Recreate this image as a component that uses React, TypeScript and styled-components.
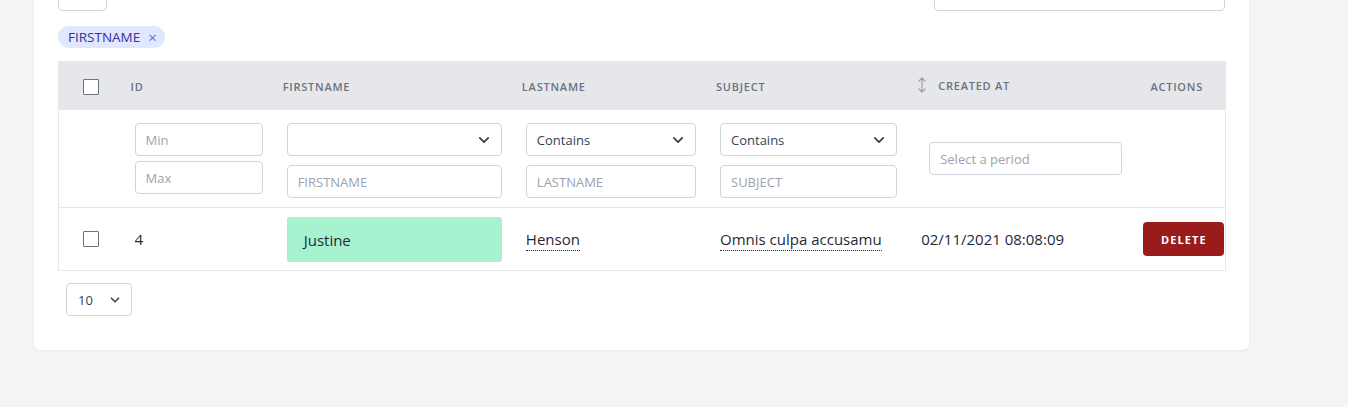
import styled, { createGlobalStyle } from 'styled-components';

const GlobalStyle = createGlobalStyle`
  html, body {
    margin: 0;
    padding: 0;
    background: #f3f4f6;
    font-family: 'Open Sans', 'Noto Sans', sans-serif;
    color: #111827;
    overflow: hidden;
  }
  * { box-sizing: border-box; }
`;

// --- Layout ---

const Page = styled.div`
  padding: 0 99px 0 34px;
  height: 407px;
`;

const Card = styled.div`
  margin-top: -51px;
  background: #ffffff;
  border-radius: 6px;
  box-shadow: 0 1px 2px rgba(0, 0, 0, 0.06);
  padding: 24px 24px 34px 24px;
`;

const Toolbar = styled.div`
  display: flex;
  justify-content: space-between;
  align-items: flex-end;
  height: 38px;
`;

const IconButton = styled.button`
  width: 49px;
  height: 38px;
  border: 1px solid #d1d5db;
  border-radius: 4px;
  background: #fff;
  display: flex;
  align-items: center;
  justify-content: center;
  padding: 0;
  color: #4b5563;
`;

const Search = styled.div`
  width: 291px;
  height: 38px;
  border: 1px solid #d1d5db;
  border-radius: 4px;
  display: flex;
  align-items: center;
  padding-left: 14px;
  color: #9ca3af;
`;

const ChipRow = styled.div`
  display: flex;
  margin: 15px 0 13px;
`;

const Chip = styled.span`
  display: inline-flex;
  align-items: center;
  gap: 8px;
  height: 22px;
  padding: 0 8px 0 10px;
  border-radius: 11px;
  background: #e0e7ff;
  color: #3730a3;
  font-size: 13.5px;
  font-weight: 500;
`;

const ChipClose = styled.span`
  color: #6366f1;
  font-size: 15px;
  line-height: 1;
`;

// --- Table ---

const Table = styled.table`
  width: 1168px;
  border-collapse: collapse;
  table-layout: fixed;
  border-left: 1px solid #e5e7eb;
  border-right: 1px solid #e5e7eb;
`;

const HeadRow = styled.tr`
  background: #e5e7eb;
  height: 49px;
`;

const Th = styled.th<{ align?: 'left' | 'right' }>`
  text-align: ${({ align }) => align ?? 'left'};
  padding: 2px ${({ align }) => (align === 'right' ? '22px' : '0')} 0 20px;
  font-size: 11px;
  font-weight: 600;
  letter-spacing: 0.07em;
  color: #6b7280;
  text-transform: uppercase;
  vertical-align: middle;
`;

const HeadInner = styled.span`
  display: inline-flex;
  align-items: center;
  gap: 11px;
`;

const FilterRow = styled.tr`
  border-bottom: 1px solid #e5e7eb;
`;

const FilterTd = styled.td<{ offset?: number }>`
  padding: 13px 0 9px ${({ offset }) => offset ?? 24}px;
  vertical-align: top;
`;

const FilterCenterTd = styled.td<{ offset?: number }>`
  padding: 0 0 0 ${({ offset }) => offset ?? 24}px;
  vertical-align: middle;
`;

const Stack = styled.div<{ gap: number }>`
  display: flex;
  flex-direction: column;
  gap: ${({ gap }) => gap}px;
`;

const Field = styled.div<{ placeholder?: boolean; width?: number }>`
  height: 33px;
  width: ${({ width }) => (width ? `${width}px` : 'auto')};
  border: 1px solid #d1d5db;
  border-radius: 4px;
  background: #fff;
  display: flex;
  align-items: center;
  justify-content: space-between;
  padding: 0 10px 0 10px;
  font-size: 13px;
  color: ${({ placeholder }) => (placeholder ? '#9ca3af' : '#374151')};
`;

const DataRow = styled.tr`
  height: 62px;
  border-bottom: 1px solid #e5e7eb;
`;

const Td = styled.td<{ offset?: number }>`
  padding: 0 0 0 ${({ offset }) => offset ?? 24}px;
  font-size: 15px;
  color: #1f2937;
  vertical-align: middle;
  white-space: nowrap;
`;

const Highlight = styled.div`
  height: 45px;
  margin: 9px 0 8px;
  background: #a7f3d0;
  border-radius: 2px;
  display: flex;
  align-items: center;
  padding-left: 17px;
  font-size: 15px;
  color: #1f2937;
`;

const Dotted = styled.span`
  border-bottom: 1px dotted #1f2937;
  padding-bottom: 1px;
`;

const Checkbox = styled.span`
  display: block;
  width: 16px;
  height: 16px;
  border: 1.5px solid #6b7280;
  border-radius: 1px;
  background: #fff;
`;

const DeleteButton = styled.button`
  height: 34px;
  width: 81px;
  border: none;
  border-radius: 4px;
  background: #991b1b;
  color: #fff;
  font-family: 'Open Sans', 'Noto Sans', sans-serif;
  font-size: 11px;
  font-weight: 700;
  letter-spacing: 0.1em;
  text-transform: uppercase;
`;

const Pager = styled.div`
  margin: 12px 0 0 8px;
  width: 66px;
  height: 33px;
  border: 1px solid #d1d5db;
  border-radius: 4px;
  display: flex;
  align-items: center;
  justify-content: space-between;
  padding: 0 10px 0 11px;
  font-size: 13px;
  color: #374151;
`;

// --- Icons ---

const Chevron = ({ size = 14 }: { size?: number }) => (
  <svg width={size} height={size} viewBox="0 0 20 20" fill="none">
    <path d="M4 7l6 6 6-6" stroke="#374151" strokeWidth="2.6" strokeLinecap="round" strokeLinejoin="round" />
  </svg>
);

const SortIcon = () => (
  <svg width="10" height="18" viewBox="0 0 10 18" fill="none">
    <path d="M5 2v14M2 5l3-3 3 3M2 13l3 3 3-3" stroke="#a8a29e" strokeWidth="1.3" strokeLinecap="round" strokeLinejoin="round" />
  </svg>
);

const columnWidths = [52, 152, 239, 194, 201, 226, 102];

export default function App() {
  return (
    <Page>
      <GlobalStyle />
      <Card>
        <Toolbar>
          <IconButton>
            <svg width="18" height="18" viewBox="0 0 18 18" fill="none">
              <rect x="2.5" y="2.5" width="13" height="13" rx="2.5" stroke="#4b5563" strokeWidth="1.8" />
            </svg>
          </IconButton>
          <Search>
            <svg width="14" height="14" viewBox="0 0 20 20" fill="none">
              <circle cx="8.5" cy="8.5" r="5.5" stroke="#9ca3af" strokeWidth="2" />
              <path d="M13 13l4 4" stroke="#9ca3af" strokeWidth="2" strokeLinecap="round" />
            </svg>
          </Search>
        </Toolbar>

        <ChipRow>
          <Chip>
            FIRSTNAME <ChipClose>×</ChipClose>
          </Chip>
        </ChipRow>

        <Table>
          <colgroup>
            {columnWidths.map((w, i) => (
              <col key={i} style={{ width: w }} />
            ))}
          </colgroup>
          <thead>
            <HeadRow>
              <Th style={{ paddingLeft: 24 }}>
                <Checkbox />
              </Th>
              <Th>ID</Th>
              <Th>Firstname</Th>
              <Th>Lastname</Th>
              <Th>Subject</Th>
              <Th>
                <HeadInner>
                  <SortIcon />
                  Created at
                </HeadInner>
              </Th>
              <Th align="right">Actions</Th>
            </HeadRow>
          </thead>
          <tbody>
            <FilterRow>
              <FilterTd />
              <FilterTd>
                <Stack gap={5}>
                  <Field placeholder width={128}>Min</Field>
                  <Field placeholder width={128}>Max</Field>
                </Stack>
              </FilterTd>
              <FilterTd>
                <Stack gap={9}>
                  <Field width={215}>
                    <span />
                    <Chevron />
                  </Field>
                  <Field placeholder width={215}>FIRSTNAME</Field>
                </Stack>
              </FilterTd>
              <FilterTd>
                <Stack gap={9}>
                  <Field width={170}>
                    Contains
                    <Chevron />
                  </Field>
                  <Field placeholder width={170}>LASTNAME</Field>
                </Stack>
              </FilterTd>
              <FilterTd>
                <Stack gap={9}>
                  <Field width={177}>
                    Contains
                    <Chevron />
                  </Field>
                  <Field placeholder width={177}>SUBJECT</Field>
                </Stack>
              </FilterTd>
              <FilterCenterTd offset={32}>
                <Field placeholder width={193}>Select a period</Field>
              </FilterCenterTd>
              <FilterTd />
            </FilterRow>
            <DataRow>
              <Td>
                <Checkbox />
              </Td>
              <Td>4</Td>
              <Td>
                <Highlight>Justine</Highlight>
              </Td>
              <Td>
                <Dotted>Henson</Dotted>
              </Td>
              <Td>
                <Dotted>Omnis culpa accusamu</Dotted>
              </Td>
              <Td>02/11/2021 08:08:09</Td>
              <Td offset={20}>
                <DeleteButton>Delete</DeleteButton>
              </Td>
            </DataRow>
          </tbody>
        </Table>

        <Pager>
          10
          <Chevron size={12} />
        </Pager>
      </Card>
    </Page>
  );
}
